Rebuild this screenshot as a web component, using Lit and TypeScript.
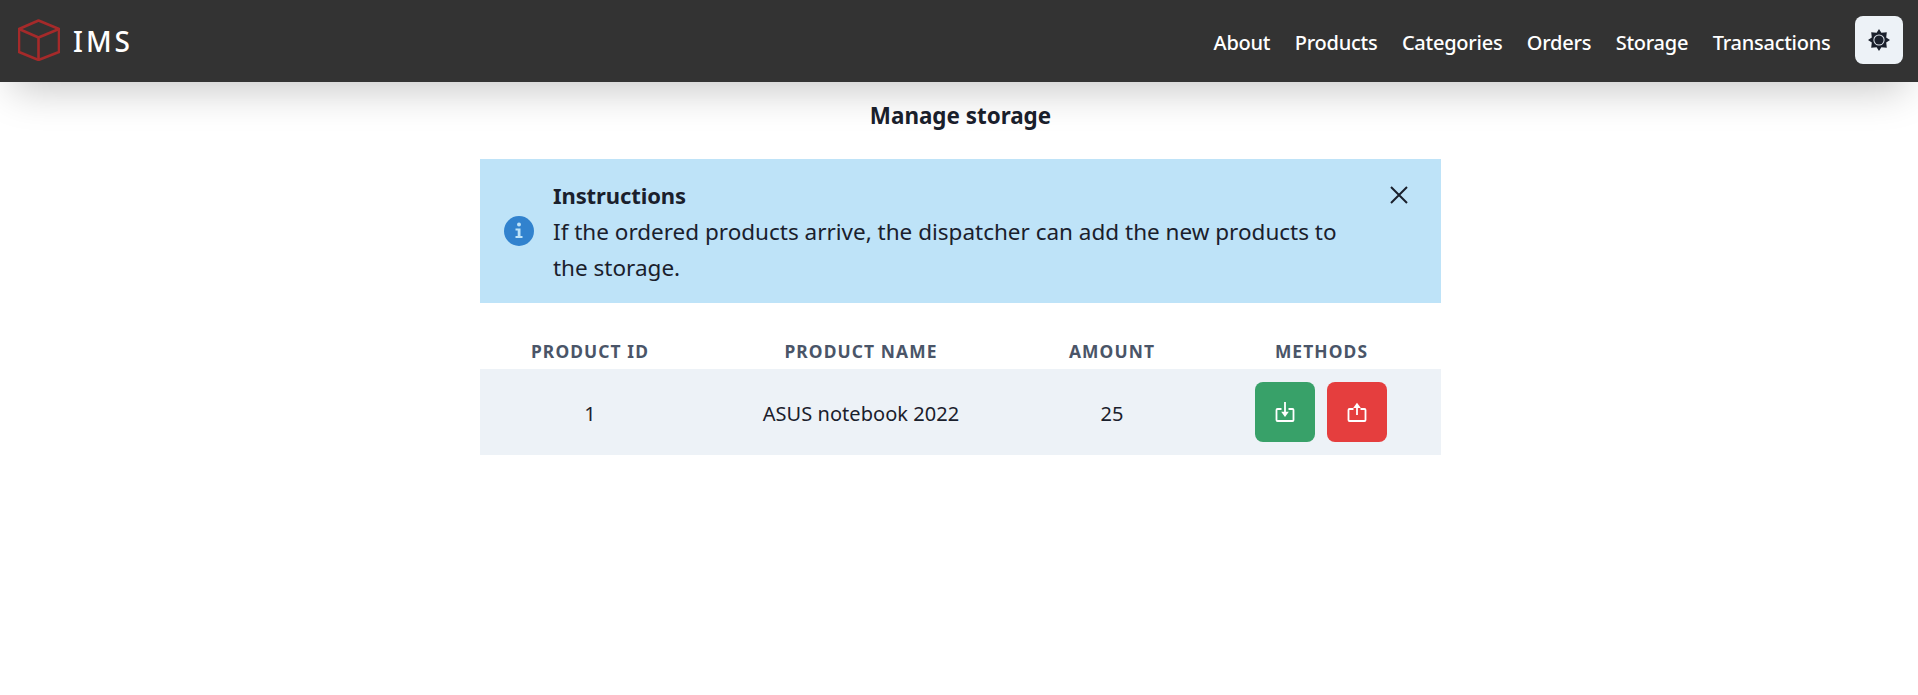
import { LitElement, html, css } from "lit";
import { customElement } from "lit/decorators.js";

@customElement("app-root")
export class AppRoot extends LitElement {
  static styles = css`
    :host { display: block; min-height: 695px; background: #fff; color: #1a202c; font-family: "Noto Sans", "Open Sans", sans-serif; overflow: hidden; }
    header { height: 82px; background: #333; display: flex; align-items: center; justify-content: space-between; padding: 0 15px 0 18px; box-shadow: 0 20px 40px -12px rgba(0,0,0,.22); position: relative; }
    .brand { display: flex; align-items: center; gap: 13px; color: #fff; font-size: 28px; font-weight: 500; letter-spacing: 3px; line-height: 1; }
    .brand svg { display: block; margin-top: -2px; }
    nav { display: flex; align-items: center; gap: 24.5px; }
    nav a { color: #fff; font-size: 20px; font-weight: 500; letter-spacing: -.25px; padding-top: 2px; }
    .theme { width: 48px; height: 48px; border-radius: 8px; background: #edf2f7; display: flex; align-items: center; justify-content: center; margin-top: -2px; }
    main { display: flex; flex-direction: column; align-items: center; padding-left: 3px; }
    h1 { margin: 17px 0 0; height: 33px; font-size: 22.4px; line-height: 33px; font-weight: 700; }
    .alert { width: 961px; height: 144px; box-sizing: border-box; margin-top: 27px; background: #bee3f8; display: flex; align-items: center; padding: 0 24px; position: relative; }
    .alert .info { flex: none; margin-right: 18px; }
    .alert .body { width: 800px; font-size: 22.5px; line-height: 36.5px; padding: 4px 0 0 1px; }
    .alert b { display: block; font-size: 22px; font-weight: 700; letter-spacing: -.1px; margin-top: -2px; }
    .close { position: absolute; top: 27px; right: 33px; width: 18px; height: 18px; display: block; }
    table { width: 961px; margin-top: 31px; border-collapse: collapse; table-layout: fixed; }
    th { height: 33px; padding: 0 0 2px; font-size: 17.4px; font-weight: 700; letter-spacing: 1.1px; color: #4a5568; text-transform: uppercase; text-align: center; vertical-align: middle; }
    td { height: 86px; padding: 0; background: #edf2f7; font-size: 20px; text-align: center; letter-spacing: .05px; }
    .cell { display: block; padding-top: 2px; }
    .btns { display: flex; justify-content: center; gap: 12px; margin-left: -2px; }
    .btn { width: 60px; height: 60px; border-radius: 8px; display: flex; align-items: center; justify-content: center; }
    .green { background: #38a169; }
    .red { background: #e53e3e; }
  `;

  render() {
    return html`
      <header>
        <div class="brand">
          <svg width="42" height="42" viewBox="0 0 42 42" fill="none" stroke="#a52a2a" stroke-width="2.6" stroke-linejoin="round">
            <path d="M20.500 1.500 L41 10 V33 L20.500 41 L1 33 V10 Z" />
            <path d="M1 10 L20.500 18.500 L41 10 M20.500 18.500 V41" />
          </svg>
          <span>IMS</span>
        </div>
        <nav>
          <a>About</a><a>Products</a><a>Categories</a><a>Orders</a><a>Storage</a><a>Transactions</a>
          <div class="theme">
            <svg width="22" height="22" viewBox="0 0 22 22">
              <path fill="#1a202c" d="M11 0 L13.4 3.8 L18.8 3.2 L18.2 8.6 L22 11 L18.2 13.4 L18.8 18.800 L13.4 18.2 L11 22 L8.6 18.2 L3.2 18.8 L3.8 13.4 L0 11 L3.8 8.6 L3.2 3.2 L8.6 3.8 Z" />
              <circle cx="11" cy="11" r="5.600" fill="#dfe5ec" />
              <circle cx="11" cy="11" r="4.600" fill="#1a202c" />
            </svg>
          </div>
        </nav>
      </header>
      <main>
        <h1>Manage storage</h1>
        <div class="alert">
          <svg class="info" width="30" height="30" viewBox="0 0 30 30">
            <circle cx="15" cy="15" r="15" fill="#3182ce" />
            <circle cx="15" cy="8.500" r="2" fill="#bee3f8" />
            <path fill="#bee3f8" d="M11.500 12.500 H16.500 V20 H18.500 V22 H11.500 V20 H13.700 V14.500 H11.500 Z" />
          </svg>
          <div class="body">
            <b>Instructions</b>
            If the ordered products arrive, the dispatcher can add the new products to the storage.
          </div>
          <svg class="close" viewBox="0 0 18 18" fill="none" stroke="#1a202c" stroke-width="2">
            <path d="M1 1 L17 17 M17 1 L1 17" />
          </svg>
        </div>
        <table>
          <colgroup><col style="width:220px" /><col style="width:322px" /><col style="width:180px" /><col style="width:239px" /></colgroup>
          <thead><tr><th>Product ID</th><th>Product name</th><th>Amount</th><th>Methods</th></tr></thead>
          <tbody>
            <tr>
              <td><span class="cell">1</span></td><td><span class="cell">ASUS notebook 2022</span></td><td><span class="cell">25</span></td>
              <td>
                <div class="btns">
                  <div class="btn green">
                    <svg width="20" height="20" viewBox="0 0 20 20" fill="none" stroke="#fff" stroke-width="1.800">
                      <path d="M6.500 7 H2.500 a1 1 0 0 0 -1 1 V18 a1 1 0 0 0 1 1 H17.500 a1 1 0 0 0 1 -1 V8 a1 1 0 0 0 -1 -1 H13.500" />
                      <path d="M10 0 V11" />
                      <path d="M6.200 9.700 H13.800 L10 15 Z" fill="#fff" stroke="none" />
                    </svg>
                  </div>
                  <div class="btn red">
                    <svg width="20" height="20" viewBox="0 0 20 20" fill="none" stroke="#fff" stroke-width="1.800">
                      <path d="M6.500 7 H2.500 a1 1 0 0 0 -1 1 V18 a1 1 0 0 0 1 1 H17.500 a1 1 0 0 0 1 -1 V8 a1 1 0 0 0 -1 -1 H13.500" />
                      <path d="M10 4 V13" />
                      <path d="M6.200 6 H13.800 L10 0.700 Z" fill="#fff" stroke="none" />
                    </svg>
                  </div>
                </div>
              </td>
            </tr>
          </tbody>
        </table>
      </main>
    `;
  }
}
